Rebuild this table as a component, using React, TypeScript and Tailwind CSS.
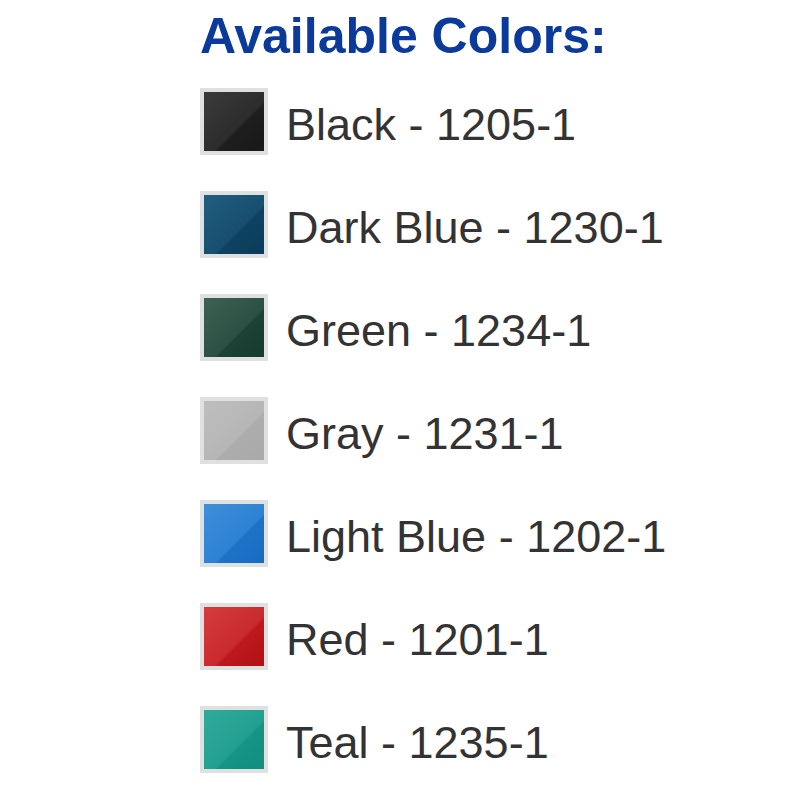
const colors = [
  { name: "Black - 1205-1", swatch: "bg-[linear-gradient(135deg,#3b3b3b_0%,#2c2c2c_58%,#1e1e1e_61%,#181818_100%)]" },
  { name: "Dark Blue - 1230-1", swatch: "bg-[linear-gradient(135deg,#215e7e_0%,#174f6f_58%,#0f4262_61%,#0b3c5a_100%)]" },
  { name: "Green - 1234-1", swatch: "bg-[linear-gradient(135deg,#3d6253_0%,#2c5144_58%,#1d4135_61%,#173a2e_100%)]" },
  { name: "Gray - 1231-1", swatch: "bg-[linear-gradient(135deg,#bebebe_0%,#b6b6b6_58%,#adadad_61%,#a9a9a9_100%)]" },
  { name: "Light Blue - 1202-1", swatch: "bg-[linear-gradient(135deg,#3f8ed8_0%,#2d82d3_58%,#1d73c8_61%,#176cc1_100%)]" },
  { name: "Red - 1201-1", swatch: "bg-[linear-gradient(135deg,#d53c3e_0%,#c92a2d_58%,#bc181d_61%,#b31116_100%)]" },
  { name: "Teal - 1235-1", swatch: "bg-[linear-gradient(135deg,#30a99a_0%,#23a090_58%,#159586_61%,#108e7f_100%)]" },
];

export default function App() {
  return (
    <main className="min-h-screen w-full bg-white font-['Liberation_Sans',Arial,sans-serif]">
      <div className="ml-[200px] flex flex-col pt-[11px]">
        <h2 className="text-[50px] font-bold leading-[50px] text-[#0b3a9b]">
          Available Colors:
        </h2>

        <ul className="mt-[27px] flex flex-col gap-[36px]">
          {colors.map((c) => (
            <li key={c.name} className="flex h-[67px] items-center gap-[18px]">
              <span className="h-[67px] w-[68px] shrink-0 border-4 border-[#dfe1e1]">
                <span className={"block h-full w-full " + c.swatch} />
              </span>
              <span className="pt-[5px] text-[45px] leading-none text-[#333333]">
                {c.name}
              </span>
            </li>
          ))}
        </ul>
      </div>
    </main>
  );
}
